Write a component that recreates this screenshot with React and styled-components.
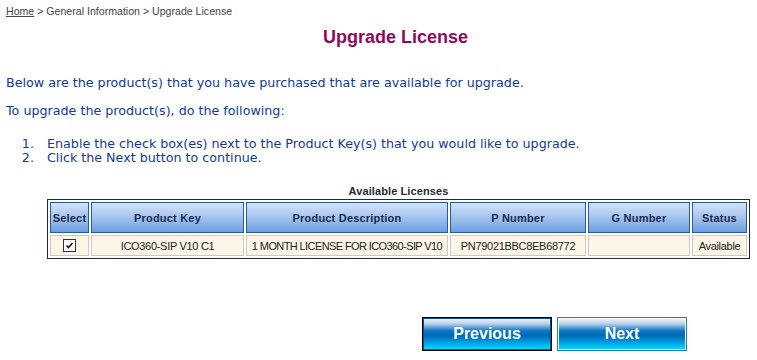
import React, { useState } from "react";
import styled, { createGlobalStyle } from "styled-components";

const Global = createGlobalStyle`
  body {
    margin: 0;
    background: #fff;
    font-family: "Liberation Sans", Arial, sans-serif;
  }
`;

const Page = styled.div`
  width: 757px;
  height: 360px;
  overflow: hidden;
  padding: 5px 6px 0;
  box-sizing: border-box;
`;

const Crumbs = styled.div`
  font-size: 10.6px;
  line-height: 13px;
  color: #444;
  a {
    color: #444;
    text-decoration: underline;
  }
`;

const Title = styled.h1`
  margin: 9px 0 0;
  padding-left: 34px;
  text-align: center;
  font-size: 18px;
  line-height: 21px;
  font-weight: bold;
  color: #8f0a5c;
`;

const Text = styled.p`
  margin: ${(p) => p.$top || 0}px 0 0;
  font-family: "DejaVu Sans", Verdana, sans-serif;
  font-size: 12.7px;
  color: #123a99;
`;

const Steps = styled.ol`
  margin: 19px 0 0;
  padding-left: 32px;
  font-family: "DejaVu Sans", Verdana, sans-serif;
  font-size: 12.7px;
  line-height: 14px;
  color: #123a99;
  li {
    padding-left: 9px;
  }
`;

const Caption = styled.div`
  margin-top: 20px;
  padding-left: 40px;
  text-align: center;
  font-size: 11px;
  letter-spacing: 0.1px;
  font-weight: bold;
  color: #1d2a3a;
`;

const Table = styled.table`
  margin: 2px 0 0 41px;
  width: 703px;
  table-layout: fixed;
  border: 1px solid #1d2d3d;
  border-spacing: 2px;
  font-size: 11px;
`;

const Th = styled.th`
  height: 29px;
  padding: 0;
  width: ${(p) => p.$w}px;
  border: 1px solid #2a5a9a;
  background: linear-gradient(#d2e3fa 0%, #a9c7f0 45%, #6b9fe2 100%);
  color: #1a2a4a;
  font-weight: bold;
  text-align: center;
  letter-spacing: 0.2px;
`;

const Td = styled.td`
  height: 19px;
  padding: 0;
  border: 1px solid #c8c8c8;
  background: #fdf5e6;
  color: #222;
  text-align: center;
  white-space: nowrap;
  overflow: hidden;
  letter-spacing: ${(p) => (p.$tight ? -0.6 : -0.3)}px;
`;

const Check = styled.span`
  display: inline-block;
  width: 11px;
  height: 11px;
  border: 1px solid #333;
  background: #fff;
  vertical-align: middle;
  line-height: 0;
`;

const Actions = styled.div`
  display: flex;
  gap: 5px;
  margin: 58px 0 0 416px;
`;

const Button = styled.button`
  width: 130px;
  height: 34px;
  padding: 0;
  border: 1px solid ${(p) => (p.$focus ? "#000" : "#1b7cc6")};
  box-shadow: inset 0 0 0 1px ${(p) => (p.$focus ? "#0d4f8a" : "#fff")};
  background: linear-gradient(#f4f8fc 0%, #b8d0ea 18%, #0a78c4 40%, #0068b6 55%, #00a8e8 80%, #00e4ff 100%);
  color: #fff;
  font-family: "Liberation Sans", Arial, sans-serif;
  font-size: 16px;
  font-weight: bold;
  cursor: pointer;
`;

const App = () => {
  const [checked] = useState(true);
  return (
    <Page>
      <Global />
      <Crumbs>
        <a>Home</a> &gt; General Information &gt; Upgrade License
      </Crumbs>
      <Title>Upgrade License</Title>
      <Text $top={27}>
        Below are the product(s) that you have purchased that are available for upgrade.
      </Text>
      <Text $top={13}>To upgrade the product(s), do the following:</Text>
      <Steps>
        <li>Enable the check box(es) next to the Product Key(s) that you would like to upgrade.</li>
        <li>Click the Next button to continue.</li>
      </Steps>
      <Caption>Available Licenses</Caption>
      <Table>
        <thead>
          <tr>
            <Th $w={37}>Select</Th>
            <Th $w={151}>Product Key</Th>
            <Th $w={200}>Product Description</Th>
            <Th $w={134}>P Number</Th>
            <Th $w={100}>G Number</Th>
            <Th $w={53}>Status</Th>
          </tr>
        </thead>
        <tbody>
          <tr>
            <Td>
              <Check>
                {checked && (
                  <svg width="11" height="11" viewBox="0 0 11 11">
                    <path d="M2.5 5.5 L4.5 7.5 L8.5 3" stroke="#111" strokeWidth="1.6" fill="none" />
                  </svg>
                )}
              </Check>
            </Td>
            <Td>ICO360-SIP V10 C1</Td>
            <Td $tight>1 MONTH LICENSE FOR ICO360-SIP V10</Td>
            <Td>PN79021BBC8EB68772</Td>
            <Td></Td>
            <Td>Available</Td>
          </tr>
        </tbody>
      </Table>
      <Actions>
        <Button $focus>Previous</Button>
        <Button>Next</Button>
      </Actions>
    </Page>
  );
};

export default App;
